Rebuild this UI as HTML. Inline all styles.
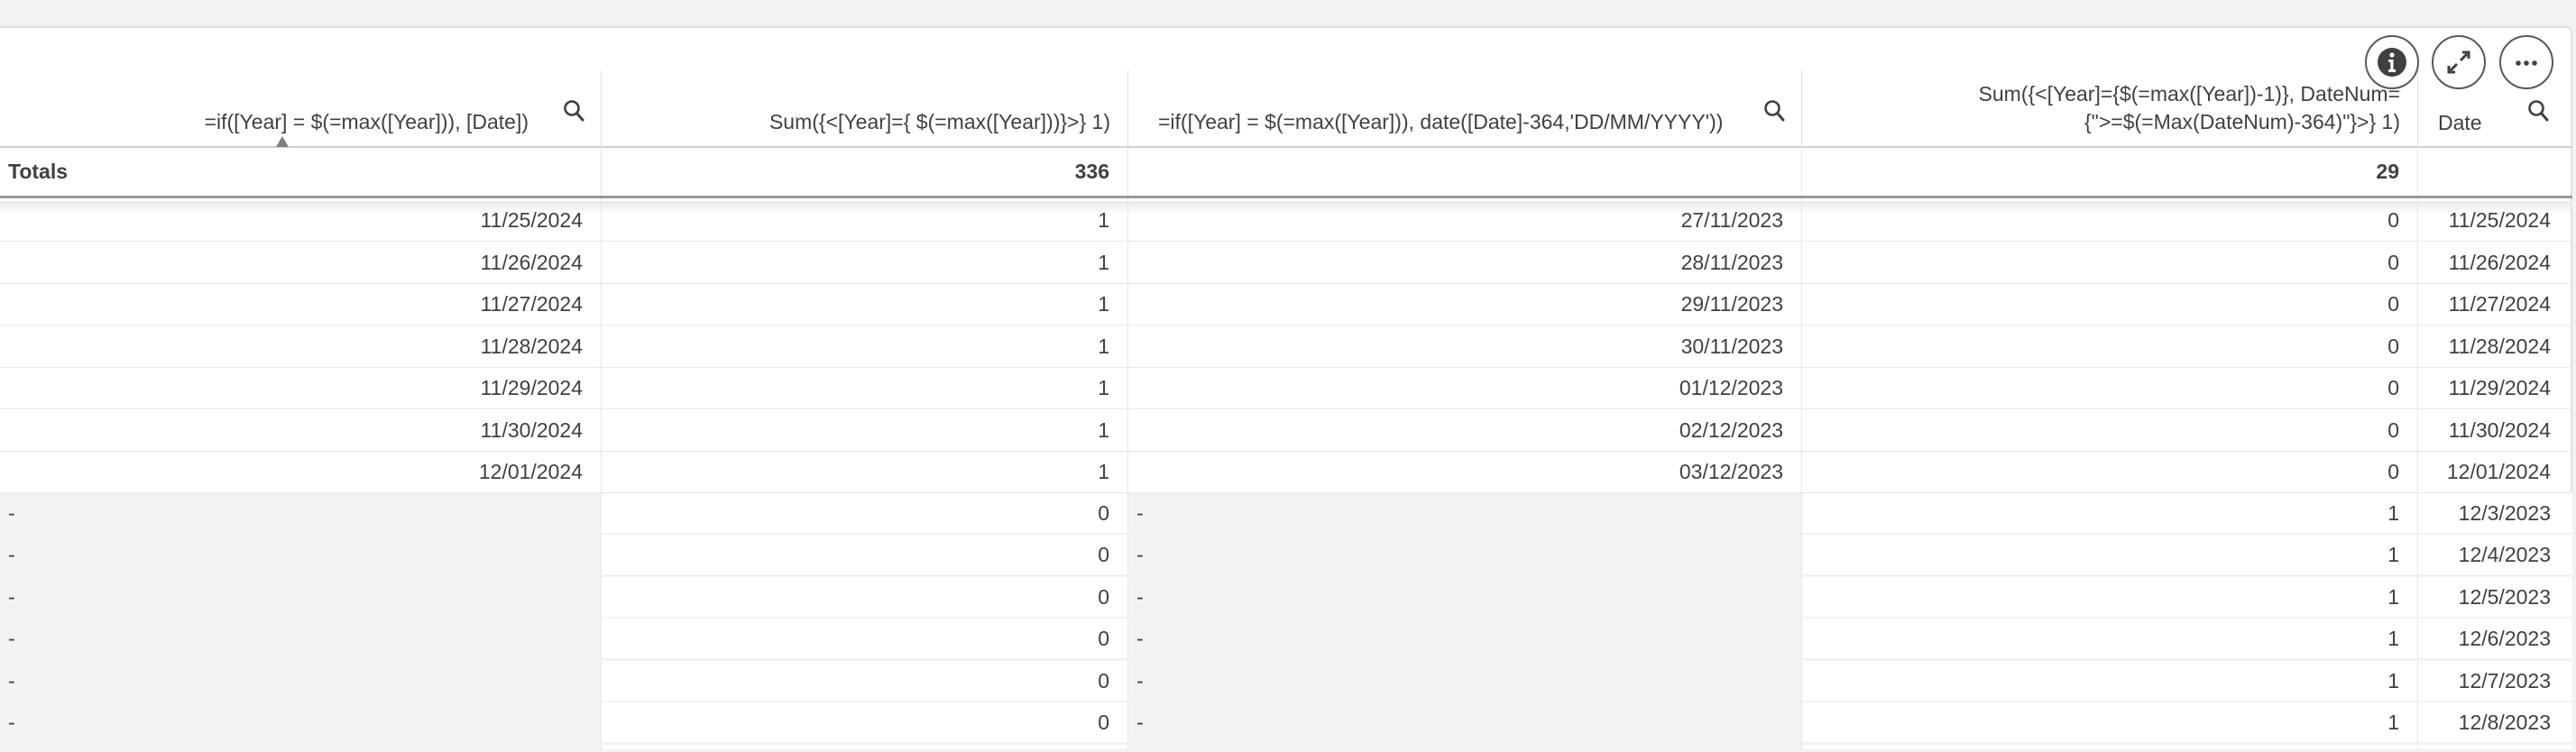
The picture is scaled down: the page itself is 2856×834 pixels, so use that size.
<!DOCTYPE html>
<html style="width:2856px;height:834px;overflow:hidden"><head><meta charset="utf-8"><style>
*{margin:0;padding:0;box-sizing:border-box}
body{width:2856px;height:834px;overflow:hidden;background:#f2f2f2;font-family:"Liberation Sans",sans-serif;color:#404040;position:relative}
.card{position:absolute;left:0;top:29px;width:2852px;height:805px;background:#fff;border-top:2px solid #ddd;border-right:2px solid #e0e0e0;border-radius:0 6px 0 0}
.row{position:absolute;left:0;width:2852px;height:47px;font-size:23px}
.c{position:absolute;top:0;height:100%;display:flex;align-items:center;padding:0 20px;border-right:1px solid #e6e6e6}
.r{justify-content:flex-end}
.l{justify-content:flex-start;padding-left:9px}
.w .c{border-bottom:1px solid #e8e8e8}
.g .c{background:#fff;border-bottom:3px solid #f2f2f2}
.g .c.gr{background:#f2f2f2;border-right:1px solid #e6e6e6}
.c1{left:0;width:667px}.c2{left:667px;width:584px}.c3{left:1251px;width:747px}.c4{left:1998px;width:683px}.c5{left:2681px;width:171px;border-right:none}
.hd{position:absolute;font-size:23px;color:#404040;line-height:31px;white-space:nowrap}
.mag{position:absolute}
.circ{position:absolute;width:60px;height:60px;border:2px solid #595959;border-radius:50%;background:#fff;top:39px}
</style></head><body>
<div class="card"></div>
<div style="position:absolute;left:0;top:78px;width:2852px;height:86px;border-bottom:2px solid #d0d0d0"></div>
<div style="position:absolute;left:666px;top:78px;width:1px;height:143px;background:#e0e0e0"></div>
<div style="position:absolute;left:1250px;top:78px;width:1px;height:143px;background:#e0e0e0"></div>
<div style="position:absolute;left:1997px;top:78px;width:1px;height:143px;background:#e0e0e0"></div>
<div style="position:absolute;left:2680px;top:78px;width:1px;height:143px;background:#e0e0e0"></div>
<div class="hd" style="right:2270px;top:120px;text-align:right">=if([Year] = $(=max([Year])), [Date])</div>
<div class="hd" style="right:1625px;top:120px">Sum({&lt;[Year]={ $(=max([Year]))}&gt;} 1)</div>
<div class="hd" style="left:1284px;top:120px">=if([Year] = $(=max([Year])), date([Date]-364,'DD/MM/YYYY'))</div>
<div class="hd" style="right:195px;top:89px;text-align:right">Sum({&lt;[Year]={$(=max([Year])-1)}, DateNum=<br>{"&gt;=$(=Max(DateNum)-364)"}&gt;} 1)</div>
<div class="hd" style="left:2703px;top:121px">Date</div>
<svg class="mag" style="left:624px;top:110px" width="26" height="28" viewBox="0 0 26 28"><circle cx="10" cy="10" r="7.5" fill="none" stroke="#404040" stroke-width="2.6"/><path d="M15.5 15.5L22 23" stroke="#404040" stroke-width="3" stroke-linecap="round"/></svg>
<svg class="mag" style="left:1955px;top:110px" width="26" height="28" viewBox="0 0 26 28"><circle cx="10" cy="10" r="7.5" fill="none" stroke="#404040" stroke-width="2.6"/><path d="M15.5 15.5L22 23" stroke="#404040" stroke-width="3" stroke-linecap="round"/></svg>
<svg class="mag" style="left:2802px;top:110px" width="26" height="28" viewBox="0 0 26 28"><circle cx="10" cy="10" r="7.5" fill="none" stroke="#404040" stroke-width="2.6"/><path d="M15.5 15.5L22 23" stroke="#404040" stroke-width="3" stroke-linecap="round"/></svg>
<svg style="position:absolute;left:306px;top:151px" width="14" height="12"><path d="M7 0L14 12H0Z" fill="#808080"/></svg>
<div class="circ" style="left:2622px"><svg width="56" height="56" viewBox="0 0 56 56"><circle cx="28" cy="28" r="16" fill="#404040"/><circle cx="28" cy="20" r="2.6" fill="#fff"/><path d="M24 25h5.5v11h2.5v3h-8v-3h2.3v-8H24z" fill="#fff"/></svg></div>
<div class="circ" style="left:2696px"><svg width="56" height="56" viewBox="0 0 56 56"><path d="M30 26L37 19M32 17h7v7" stroke="#404040" stroke-width="3" fill="none"/><path d="M26 30L19 37M17 32v7h7" stroke="#404040" stroke-width="3" fill="none"/></svg></div>
<div class="circ" style="left:2771px"><svg width="56" height="56" viewBox="0 0 56 56"><circle cx="19" cy="29" r="2.8" fill="#404040"/><circle cx="28" cy="29" r="2.8" fill="#404040"/><circle cx="37" cy="29" r="2.8" fill="#404040"/></svg></div>
<div class="row" style="top:164px;height:56px;font-weight:bold;border-bottom:3px solid #999">
<div class="c c1 l" style="border-right:1px solid #e0e0e0">Totals</div><div class="c c2 r">336</div><div class="c c3"></div><div class="c c4 r">29</div><div class="c c5"></div></div>
<div style="position:absolute;left:0;top:223px;width:2852px;height:14px;background:linear-gradient(#e8e8e8,rgba(255,255,255,0))"></div>

<div class="row w" style="top:221px"><div class="c c1 r">11/25/2024</div><div class="c c2 r">1</div><div class="c c3 r">27/11/2023</div><div class="c c4 r">0</div><div class="c c5 r" style="padding-right:24px">11/25/2024</div></div>
<div class="row w" style="top:268px"><div class="c c1 r">11/26/2024</div><div class="c c2 r">1</div><div class="c c3 r">28/11/2023</div><div class="c c4 r">0</div><div class="c c5 r" style="padding-right:24px">11/26/2024</div></div>
<div class="row w" style="top:314px"><div class="c c1 r">11/27/2024</div><div class="c c2 r">1</div><div class="c c3 r">29/11/2023</div><div class="c c4 r">0</div><div class="c c5 r" style="padding-right:24px">11/27/2024</div></div>
<div class="row w" style="top:361px"><div class="c c1 r">11/28/2024</div><div class="c c2 r">1</div><div class="c c3 r">30/11/2023</div><div class="c c4 r">0</div><div class="c c5 r" style="padding-right:24px">11/28/2024</div></div>
<div class="row w" style="top:407px"><div class="c c1 r">11/29/2024</div><div class="c c2 r">1</div><div class="c c3 r">01/12/2023</div><div class="c c4 r">0</div><div class="c c5 r" style="padding-right:24px">11/29/2024</div></div>
<div class="row w" style="top:454px"><div class="c c1 r">11/30/2024</div><div class="c c2 r">1</div><div class="c c3 r">02/12/2023</div><div class="c c4 r">0</div><div class="c c5 r" style="padding-right:24px">11/30/2024</div></div>
<div class="row w" style="top:500px"><div class="c c1 r">12/01/2024</div><div class="c c2 r">1</div><div class="c c3 r">03/12/2023</div><div class="c c4 r">0</div><div class="c c5 r" style="padding-right:24px">12/01/2024</div></div>

<div class="row g" style="top:547px"><div class="c c1 l gr">-</div><div class="c c2 r">0</div><div class="c c3 l gr">-</div><div class="c c4 r">1</div><div class="c c5 r" style="padding-right:24px">12/3/2023</div></div>
<div class="row g" style="top:593px"><div class="c c1 l gr">-</div><div class="c c2 r">0</div><div class="c c3 l gr">-</div><div class="c c4 r">1</div><div class="c c5 r" style="padding-right:24px">12/4/2023</div></div>
<div class="row g" style="top:640px"><div class="c c1 l gr">-</div><div class="c c2 r">0</div><div class="c c3 l gr">-</div><div class="c c4 r">1</div><div class="c c5 r" style="padding-right:24px">12/5/2023</div></div>
<div class="row g" style="top:686px"><div class="c c1 l gr">-</div><div class="c c2 r">0</div><div class="c c3 l gr">-</div><div class="c c4 r">1</div><div class="c c5 r" style="padding-right:24px">12/6/2023</div></div>
<div class="row g" style="top:733px"><div class="c c1 l gr">-</div><div class="c c2 r">0</div><div class="c c3 l gr">-</div><div class="c c4 r">1</div><div class="c c5 r" style="padding-right:24px">12/7/2023</div></div>
<div class="row g" style="top:779px"><div class="c c1 l gr">-</div><div class="c c2 r">0</div><div class="c c3 l gr">-</div><div class="c c4 r">1</div><div class="c c5 r" style="padding-right:24px">12/8/2023</div></div>
<div class="row g" style="top:826px;height:8px"><div class="c c1 l gr"></div><div class="c c2 r"></div><div class="c c3 l gr"></div><div class="c c4 r"></div><div class="c c5 r"></div></div>
</body></html>
